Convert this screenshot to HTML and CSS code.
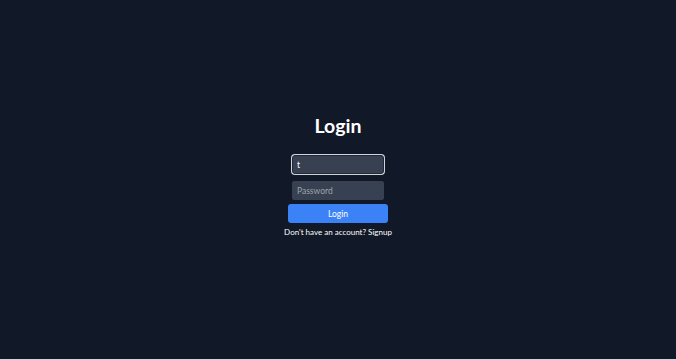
FILE: index.html
```html
<!DOCTYPE html>
<html>
<head>
<meta charset="utf-8">
<link rel="stylesheet" href="styles.css">
</head>
<body>
<main class="page">
  <form class="login">
    <h1 class="title">Login</h1>
    <input class="field field-focus" type="text" value="t">
    <input class="field" type="password" placeholder="Password">
    <button class="btn" type="button">Login</button>
    <p class="note">Don't have an account? <a class="link" href="#">Signup</a></p>
  </form>
</main>
</body>
</html>
```
FILE: styles.css
```css
html {
  margin: 0;
  padding: 0;
  background: #d1d5db;
}
body {
  margin: 0;
  padding: 0;
  background: #111827;
}
.page {
  box-sizing: border-box;
  height: 359px;
  padding-top: 114px;
  display: flex;
  justify-content: center;
  font-family: Lato, "Noto Sans", sans-serif;
  color: #ffffff;
}
.login {
  display: flex;
  flex-direction: column;
  align-items: center;
  width: 100px;
}
.title {
  margin: 0 0 17px 0;
  font-size: 19.5px;
  font-weight: 700;
  line-height: 24px;
  height: 24px;
}
.field {
  box-sizing: border-box;
  width: 92px;
  height: 19px;
  margin: 0 0 4px 0;
  padding: 0 4px;
  background: #374151;
  border: 1px solid #374151;
  border-radius: 2px;
  color: #ffffff;
  font-family: Lato, "Noto Sans", sans-serif;
  font-size: 8.5px;
  outline: none;
}
.field::placeholder {
  color: #9ca3af;
}
.field-focus {
  border: 1px solid #1f2937;
  box-shadow: 0 0 0 1px #d1d5db;
  border-radius: 3px;
  margin-bottom: 7px;
}
.btn {
  box-sizing: border-box;
  width: 100px;
  height: 19px;
  margin: 0;
  padding: 0;
  border: none;
  border-radius: 3px;
  background: #3b82f6;
  color: #ffffff;
  font-family: Lato, "Noto Sans", sans-serif;
  font-size: 8.5px;
}
.note {
  margin: 4px 0 0 0;
  font-size: 8px;
  line-height: 10px;
  white-space: nowrap;
}
.link {
  color: #ffffff;
  text-decoration: none;
}
```
